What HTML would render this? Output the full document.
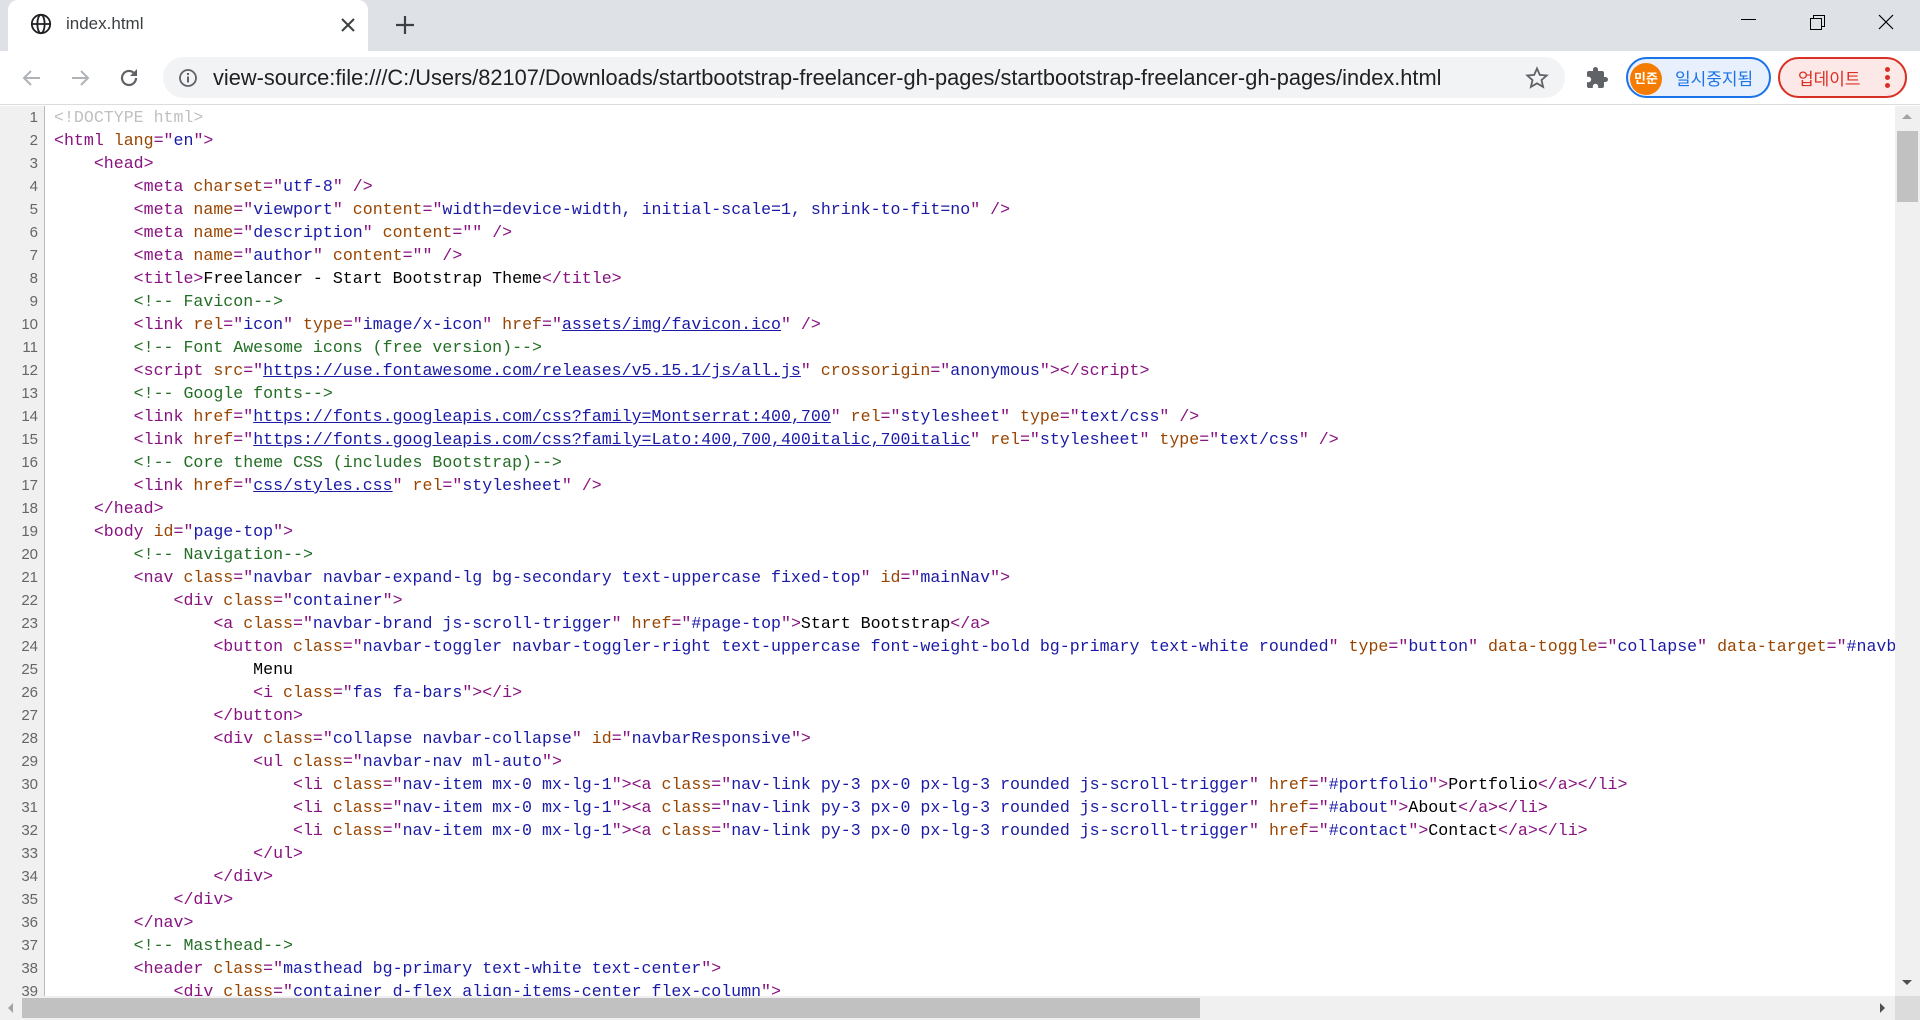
<!DOCTYPE html>
<html><head><meta charset="utf-8"><style>
*{margin:0;padding:0;box-sizing:border-box}
body{width:1920px;height:1020px;overflow:hidden;background:#fff;font-family:"Liberation Sans","Noto Sans CJK KR",sans-serif;position:relative}
.tabbar{position:absolute;left:0;top:0;width:1920px;height:51px;background:#dee1e6}
.tab{position:absolute;left:8px;top:0;width:360px;height:51px;background:#fff;border-radius:10px 10px 0 0}
.toolbar{position:absolute;left:0;top:51px;width:1920px;height:54px;background:#fff;border-bottom:1px solid #dadce0}
.omni{position:absolute;left:163px;top:57px;width:1402px;height:41px;background:#f1f3f4;border-radius:21px}
.gutter{position:absolute;left:0;top:106px;width:45px;height:890px;background:#f0f0f0;border-right:1px solid #bbb}
.code{position:absolute;left:0;top:106px;width:1895px;height:890px;overflow:hidden;font-family:"Liberation Mono",monospace;font-size:16.6px;color:#000}
.ln{height:23px;line-height:23px;position:relative;white-space:nowrap}
.ln b{position:absolute;left:0;width:38px;text-align:right;font-weight:normal;color:#666;font-family:"Liberation Sans",sans-serif;font-size:15px}
.ln span.l{position:absolute;left:54px;white-space:pre}
.t{color:#881280}.a{color:#994500}.v{color:#1a1aa6}.c{color:#236e25}.d{color:#c0c0c0}.u{color:#1a1aa6;text-decoration:underline}
.vs{position:absolute;left:1895px;top:106px;width:25px;height:890px;background:#f0f0f0}
.hs{position:absolute;left:0;top:996px;width:1895px;height:24px;background:#f0f0f0}
</style></head><body>
<div class="tabbar">
 <div class="tab">
  <svg style="position:absolute;left:22px;top:13px" width="22" height="22" viewBox="0 0 24 24" fill="none" stroke="#202124" stroke-width="2"><circle cx="12" cy="12" r="10"/><ellipse cx="12" cy="12" rx="4" ry="10"/><line x1="2" y1="12" x2="22" y2="12"/></svg>
  <div style="position:absolute;left:58px;top:14px;font-size:17px;color:#3c4043">index.html</div>
  <svg style="position:absolute;left:333px;top:18px" width="14" height="14"><path d="M1 1L13 13M13 1L1 13" stroke="#3c4043" stroke-width="2"/></svg>
 </div>
 <svg style="position:absolute;left:395px;top:15px" width="20" height="20"><path d="M10 1v18M1 10h18" stroke="#3c4043" stroke-width="2.2"/></svg>
 <div style="position:absolute;left:1741px;top:19px;width:15px;height:1px;background:#000"></div>
 <div style="position:absolute;left:1813px;top:15px;width:12px;height:12px;border:1px solid #000;background:#dee1e6"></div>
 <div style="position:absolute;left:1810px;top:18px;width:12px;height:12px;border:1px solid #000;background:#dee1e6"></div>
 <svg style="position:absolute;left:1878px;top:14px" width="16" height="16"><path d="M1 1L15 15M15 1L1 15" stroke="#000" stroke-width="1.2"/></svg>
</div>
<div class="toolbar"></div>
<svg style="position:absolute;left:20px;top:66px" width="24" height="24" viewBox="0 0 24 24"><path d="M20 12H5M11 5l-7 7 7 7" stroke="#b0b3b7" stroke-width="2" fill="none"/></svg>
<svg style="position:absolute;left:68px;top:66px" width="24" height="24" viewBox="0 0 24 24"><path d="M4 12h15M13 5l7 7-7 7" stroke="#b0b3b7" stroke-width="2" fill="none"/></svg>
<svg style="position:absolute;left:117px;top:66px" width="24" height="24" viewBox="0 0 24 24"><path d="M19 12a7 7 0 1 1-2.5-5.4" stroke="#5f6368" stroke-width="2.2" fill="none"/><path d="M20 3v7h-7z" fill="#5f6368"/></svg>
<div class="omni"></div>
<svg style="position:absolute;left:178px;top:68px" width="20" height="20" viewBox="0 0 20 20"><circle cx="10" cy="10" r="8" stroke="#5f6368" stroke-width="1.8" fill="none"/><rect x="9" y="8.5" width="2" height="6" fill="#5f6368"/><rect x="9" y="5" width="2" height="2" fill="#5f6368"/></svg>
<div style="position:absolute;left:213px;top:65px;font-size:21.8px;color:#202124">view-source:file:///C:/Users/82107/Downloads/startbootstrap-freelancer-gh-pages/startbootstrap-freelancer-gh-pages/index.html</div>
<svg style="position:absolute;left:1525px;top:66px" width="24" height="24" viewBox="0 0 24 24"><path d="M12 2.5l2.8 6.4 6.9.6-5.2 4.6 1.6 6.8L12 17.3l-6.1 3.6 1.6-6.8-5.2-4.6 6.9-.6z" stroke="#5f6368" stroke-width="1.8" fill="none"/></svg>
<svg style="position:absolute;left:1585px;top:66px" width="24" height="24" viewBox="0 0 24 24"><path d="M20.5 11H19V7a2 2 0 0 0-2-2h-4V3.5a2.5 2.5 0 0 0-5 0V5H4a2 2 0 0 0-2 2v3.8h1.5a2.7 2.7 0 0 1 0 5.4H2V20a2 2 0 0 0 2 2h3.8v-1.5a2.7 2.7 0 0 1 5.4 0V22H17a2 2 0 0 0 2-2v-4h1.5a2.5 2.5 0 0 0 0-5z" fill="#5f6368"/></svg>
<div style="position:absolute;left:1626px;top:57px;width:145px;height:41px;border:2px solid #1a73e8;border-radius:21px;background:#e8f0fe"></div>
<div style="position:absolute;left:1630px;top:63px;width:32px;height:32px;border-radius:50%;background:#f57c00;color:#fff;font-size:13px;font-weight:bold;text-align:center;line-height:32px">민준</div>
<div style="position:absolute;left:1675px;top:65px;font-size:17px;color:#1a73e8">일시중지됨</div>
<div style="position:absolute;left:1778px;top:57px;width:129px;height:41px;border:2px solid #d93025;border-radius:21px;background:#fce8e6"></div>
<div style="position:absolute;left:1798px;top:65px;font-size:17px;color:#d93025">업데이트</div>
<div style="position:absolute;left:1885px;top:67px;width:5px;height:5px;border-radius:50%;background:#d93025;box-shadow:0 8px 0 #d93025,0 16px 0 #d93025"></div>

<div class="gutter"></div>
<div class="code">
<div class="ln"><b>1</b><span class="l"><span class="d">&lt;!DOCTYPE html&gt;</span></span></div>
<div class="ln"><b>2</b><span class="l"><span class="t">&lt;html </span><span class="a">lang</span><span class="t">="</span><span class="v">en</span><span class="t">"&gt;</span></span></div>
<div class="ln"><b>3</b><span class="l">    <span class="t">&lt;head&gt;</span></span></div>
<div class="ln"><b>4</b><span class="l">        <span class="t">&lt;meta </span><span class="a">charset</span><span class="t">="</span><span class="v">utf-8</span><span class="t">" /&gt;</span></span></div>
<div class="ln"><b>5</b><span class="l">        <span class="t">&lt;meta </span><span class="a">name</span><span class="t">="</span><span class="v">viewport</span><span class="t">" </span><span class="a">content</span><span class="t">="</span><span class="v">width=device-width, initial-scale=1, shrink-to-fit=no</span><span class="t">" /&gt;</span></span></div>
<div class="ln"><b>6</b><span class="l">        <span class="t">&lt;meta </span><span class="a">name</span><span class="t">="</span><span class="v">description</span><span class="t">" </span><span class="a">content</span><span class="t">="" /&gt;</span></span></div>
<div class="ln"><b>7</b><span class="l">        <span class="t">&lt;meta </span><span class="a">name</span><span class="t">="</span><span class="v">author</span><span class="t">" </span><span class="a">content</span><span class="t">="" /&gt;</span></span></div>
<div class="ln"><b>8</b><span class="l">        <span class="t">&lt;title&gt;</span>Freelancer - Start Bootstrap Theme<span class="t">&lt;/title&gt;</span></span></div>
<div class="ln"><b>9</b><span class="l">        <span class="c">&lt;!-- Favicon--&gt;</span></span></div>
<div class="ln"><b>10</b><span class="l">        <span class="t">&lt;link </span><span class="a">rel</span><span class="t">="</span><span class="v">icon</span><span class="t">" </span><span class="a">type</span><span class="t">="</span><span class="v">image/x-icon</span><span class="t">" </span><span class="a">href</span><span class="t">="</span><span class="u">assets/img/favicon.ico</span><span class="t">" /&gt;</span></span></div>
<div class="ln"><b>11</b><span class="l">        <span class="c">&lt;!-- Font Awesome icons (free version)--&gt;</span></span></div>
<div class="ln"><b>12</b><span class="l">        <span class="t">&lt;script </span><span class="a">src</span><span class="t">="</span><span class="u">https://use.fontawesome.com/releases/v5.15.1/js/all.js</span><span class="t">" </span><span class="a">crossorigin</span><span class="t">="</span><span class="v">anonymous</span><span class="t">"&gt;&lt;/script&gt;</span></span></div>
<div class="ln"><b>13</b><span class="l">        <span class="c">&lt;!-- Google fonts--&gt;</span></span></div>
<div class="ln"><b>14</b><span class="l">        <span class="t">&lt;link </span><span class="a">href</span><span class="t">="</span><span class="u">https://fonts.googleapis.com/css?family=Montserrat:400,700</span><span class="t">" </span><span class="a">rel</span><span class="t">="</span><span class="v">stylesheet</span><span class="t">" </span><span class="a">type</span><span class="t">="</span><span class="v">text/css</span><span class="t">" /&gt;</span></span></div>
<div class="ln"><b>15</b><span class="l">        <span class="t">&lt;link </span><span class="a">href</span><span class="t">="</span><span class="u">https://fonts.googleapis.com/css?family=Lato:400,700,400italic,700italic</span><span class="t">" </span><span class="a">rel</span><span class="t">="</span><span class="v">stylesheet</span><span class="t">" </span><span class="a">type</span><span class="t">="</span><span class="v">text/css</span><span class="t">" /&gt;</span></span></div>
<div class="ln"><b>16</b><span class="l">        <span class="c">&lt;!-- Core theme CSS (includes Bootstrap)--&gt;</span></span></div>
<div class="ln"><b>17</b><span class="l">        <span class="t">&lt;link </span><span class="a">href</span><span class="t">="</span><span class="u">css/styles.css</span><span class="t">" </span><span class="a">rel</span><span class="t">="</span><span class="v">stylesheet</span><span class="t">" /&gt;</span></span></div>
<div class="ln"><b>18</b><span class="l">    <span class="t">&lt;/head&gt;</span></span></div>
<div class="ln"><b>19</b><span class="l">    <span class="t">&lt;body </span><span class="a">id</span><span class="t">="</span><span class="v">page-top</span><span class="t">"&gt;</span></span></div>
<div class="ln"><b>20</b><span class="l">        <span class="c">&lt;!-- Navigation--&gt;</span></span></div>
<div class="ln"><b>21</b><span class="l">        <span class="t">&lt;nav </span><span class="a">class</span><span class="t">="</span><span class="v">navbar navbar-expand-lg bg-secondary text-uppercase fixed-top</span><span class="t">" </span><span class="a">id</span><span class="t">="</span><span class="v">mainNav</span><span class="t">"&gt;</span></span></div>
<div class="ln"><b>22</b><span class="l">            <span class="t">&lt;div </span><span class="a">class</span><span class="t">="</span><span class="v">container</span><span class="t">"&gt;</span></span></div>
<div class="ln"><b>23</b><span class="l">                <span class="t">&lt;a </span><span class="a">class</span><span class="t">="</span><span class="v">navbar-brand js-scroll-trigger</span><span class="t">" </span><span class="a">href</span><span class="t">="</span><span class="v">#page-top</span><span class="t">"&gt;</span>Start Bootstrap<span class="t">&lt;/a&gt;</span></span></div>
<div class="ln"><b>24</b><span class="l">                <span class="t">&lt;button </span><span class="a">class</span><span class="t">="</span><span class="v">navbar-toggler navbar-toggler-right text-uppercase font-weight-bold bg-primary text-white rounded</span><span class="t">" </span><span class="a">type</span><span class="t">="</span><span class="v">button</span><span class="t">" </span><span class="a">data-toggle</span><span class="t">="</span><span class="v">collapse</span><span class="t">" </span><span class="a">data-target</span><span class="t">="</span><span class="v">#navbarResponsive</span><span class="t">"</span></span></div>
<div class="ln"><b>25</b><span class="l">                    Menu</span></div>
<div class="ln"><b>26</b><span class="l">                    <span class="t">&lt;i </span><span class="a">class</span><span class="t">="</span><span class="v">fas fa-bars</span><span class="t">"&gt;&lt;/i&gt;</span></span></div>
<div class="ln"><b>27</b><span class="l">                <span class="t">&lt;/button&gt;</span></span></div>
<div class="ln"><b>28</b><span class="l">                <span class="t">&lt;div </span><span class="a">class</span><span class="t">="</span><span class="v">collapse navbar-collapse</span><span class="t">" </span><span class="a">id</span><span class="t">="</span><span class="v">navbarResponsive</span><span class="t">"&gt;</span></span></div>
<div class="ln"><b>29</b><span class="l">                    <span class="t">&lt;ul </span><span class="a">class</span><span class="t">="</span><span class="v">navbar-nav ml-auto</span><span class="t">"&gt;</span></span></div>
<div class="ln"><b>30</b><span class="l">                        <span class="t">&lt;li </span><span class="a">class</span><span class="t">="</span><span class="v">nav-item mx-0 mx-lg-1</span><span class="t">"&gt;&lt;a </span><span class="a">class</span><span class="t">="</span><span class="v">nav-link py-3 px-0 px-lg-3 rounded js-scroll-trigger</span><span class="t">" </span><span class="a">href</span><span class="t">="</span><span class="v">#portfolio</span><span class="t">"&gt;</span>Portfolio<span class="t">&lt;/a&gt;&lt;/li&gt;</span></span></div>
<div class="ln"><b>31</b><span class="l">                        <span class="t">&lt;li </span><span class="a">class</span><span class="t">="</span><span class="v">nav-item mx-0 mx-lg-1</span><span class="t">"&gt;&lt;a </span><span class="a">class</span><span class="t">="</span><span class="v">nav-link py-3 px-0 px-lg-3 rounded js-scroll-trigger</span><span class="t">" </span><span class="a">href</span><span class="t">="</span><span class="v">#about</span><span class="t">"&gt;</span>About<span class="t">&lt;/a&gt;&lt;/li&gt;</span></span></div>
<div class="ln"><b>32</b><span class="l">                        <span class="t">&lt;li </span><span class="a">class</span><span class="t">="</span><span class="v">nav-item mx-0 mx-lg-1</span><span class="t">"&gt;&lt;a </span><span class="a">class</span><span class="t">="</span><span class="v">nav-link py-3 px-0 px-lg-3 rounded js-scroll-trigger</span><span class="t">" </span><span class="a">href</span><span class="t">="</span><span class="v">#contact</span><span class="t">"&gt;</span>Contact<span class="t">&lt;/a&gt;&lt;/li&gt;</span></span></div>
<div class="ln"><b>33</b><span class="l">                    <span class="t">&lt;/ul&gt;</span></span></div>
<div class="ln"><b>34</b><span class="l">                <span class="t">&lt;/div&gt;</span></span></div>
<div class="ln"><b>35</b><span class="l">            <span class="t">&lt;/div&gt;</span></span></div>
<div class="ln"><b>36</b><span class="l">        <span class="t">&lt;/nav&gt;</span></span></div>
<div class="ln"><b>37</b><span class="l">        <span class="c">&lt;!-- Masthead--&gt;</span></span></div>
<div class="ln"><b>38</b><span class="l">        <span class="t">&lt;header </span><span class="a">class</span><span class="t">="</span><span class="v">masthead bg-primary text-white text-center</span><span class="t">"&gt;</span></span></div>
<div class="ln"><b>39</b><span class="l">            <span class="t">&lt;div </span><span class="a">class</span><span class="t">="</span><span class="v">container d-flex align-items-center flex-column</span><span class="t">"&gt;</span></span></div>
</div>
<div class="vs">
 <div style="position:absolute;left:7px;top:8px;border:5px solid transparent;border-bottom:5px solid #a3a3a3;border-top:0"></div>
 <div style="position:absolute;left:2px;top:25px;width:21px;height:71px;background:#c1c1c1"></div>
 <div style="position:absolute;left:7px;top:874px;border:5px solid transparent;border-top:5px solid #505050;border-bottom:0"></div>
</div>
<div class="hs">
 <div style="position:absolute;left:8px;top:7px;border:5px solid transparent;border-right:5px solid #a3a3a3;border-left:0"></div>
 <div style="position:absolute;left:22px;top:2px;width:1178px;height:20px;background:#c1c1c1"></div>
 <div style="position:absolute;left:1880px;top:7px;border:5px solid transparent;border-left:5px solid #505050;border-right:0"></div>
</div>
<div style="position:absolute;left:1895px;top:996px;width:25px;height:24px;background:#dcdcdc"></div>
</body></html>
